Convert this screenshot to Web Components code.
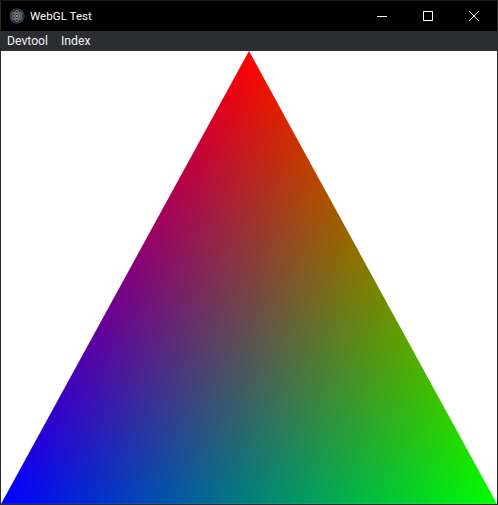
<!DOCTYPE html>
<html>
<head>
<meta charset="utf-8">
<title>WebGL Test</title>
<style>
	html, body { margin: 0; height: 100%; background: #000; overflow: hidden; }
</style>
</head>
<body>
<app-window>
	<title-bar slot="top" label="WebGL Test"></title-bar>
	<menu-bar slot="top">
		<menu-item>Devtool</menu-item>
		<menu-item>Index</menu-item>
	</menu-bar>
	<gl-triangle></gl-triangle>
</app-window>

<script>
class appWindow extends HTMLElement {
	constructor() {
		super();
		const shadow = this.attachShadow({ mode: 'open' });
		shadow.innerHTML = `
			<style>
				:host {
					display: flex;
					flex-direction: column;
					box-sizing: border-box;
					width: 498px;
					height: 505px;
					border: 1px solid #2b2b2b;
					border-top-color: #1a1a1a;
					background: #fff;
					font-family: Roboto, "Noto Sans", sans-serif;
				}
				.content { flex: 1; min-height: 0; display: flex; }
			</style>
			<slot name="top"></slot>
			<div class="content"><slot></slot></div>
		`;
	}
}
customElements.define('app-window', appWindow);

class titleBar extends HTMLElement {
	constructor() {
		super();
		const shadow = this.attachShadow({ mode: 'open' });
		shadow.innerHTML = `
			<style>
				:host {
					display: flex;
					align-items: center;
					height: 30px;
					background: #000;
					color: #fff;
					font-size: 11.6px;
				}
				.logo { width: 16px; height: 16px; margin: 0 5px 0 8px; flex: none; }
				.label { flex: 1; }
				.btn { width: 46px; height: 30px; flex: none; display: flex; align-items: center; justify-content: center; }
				svg { display: block; }
			</style>
			<svg class="logo" viewBox="0 0 16 16" fill="none">
				<circle cx="8" cy="8" r="7.8" fill="#2f323b"/>
				<g stroke="#a9bcc4" stroke-width=".7" opacity=".7">
					<ellipse cx="8" cy="8" rx="5.6" ry="2.3" transform="rotate(30 8 8)"/>
					<ellipse cx="8" cy="8" rx="5.6" ry="2.3" transform="rotate(-30 8 8)"/>
					<ellipse cx="8" cy="8" rx="5.6" ry="2.3" transform="rotate(90 8 8)"/>
				</g>
				<circle cx="8" cy="8" r=".9" fill="#a9bcc4"/>
			</svg>
			<span class="label"></span>
			<div class="btn">
				<svg width="10" height="10" viewBox="0 0 10 10"><path d="M0 5.5H10" stroke="#fff" fill="none"/></svg>
			</div>
			<div class="btn">
				<svg width="10" height="10" viewBox="0 0 10 10"><rect x=".5" y=".5" width="9" height="9" stroke="#fff" fill="none"/></svg>
			</div>
			<div class="btn">
				<svg width="10" height="10" viewBox="0 0 10 10"><path d="M0 0L10 10M10 0L0 10" stroke="#fff" stroke-width="1" fill="none"/></svg>
			</div>
		`;
		shadow.querySelector('.label').textContent = this.getAttribute('label');
	}
}
customElements.define('title-bar', titleBar);

class menuBar extends HTMLElement {
	constructor() {
		super();
		const shadow = this.attachShadow({ mode: 'open' });
		shadow.innerHTML = `
			<style>
				:host {
					display: flex;
					align-items: center;
					gap: 13px;
					height: 20px;
					padding-left: 6px;
					background: #2b2d30;
					color: #f0f0f0;
					font-size: 12.2px;
				}
			</style>
			<slot></slot>
		`;
	}
}
customElements.define('menu-bar', menuBar);

class menuItem extends HTMLElement {
	constructor() {
		super();
		const shadow = this.attachShadow({ mode: 'open' });
		shadow.innerHTML = `
			<style>:host { display: block; line-height: 20px; }</style>
			<slot></slot>
		`;
	}
}
customElements.define('menu-item', menuItem);

// one colour per corner, interpolated the way the vertex shader output would be
class glTriangle extends HTMLElement {
	constructor() {
		super();
		const shadow = this.attachShadow({ mode: 'open' });
		shadow.innerHTML = `
			<style>
				:host { display: block; flex: 1; background: #fff; }
				canvas { display: block; }
			</style>
			<canvas width="496" height="453"></canvas>
		`;
	}

	connectedCallback() {
		const canvas = this.shadowRoot.querySelector('canvas');
		const ctx = canvas.getContext('2d');
		const w = canvas.width, h = canvas.height;
		const img = ctx.createImageData(w, h);
		for (let y = 0; y < h; y++) {
			for (let x = 0; x < w; x++) {
				const px = x + 0.5, py = y + 0.5;
				const r = 1 - py / h;
				const g = (px - w / 2) / w + py / h / 2;
				const b = 1 - r - g;
				const edge = Math.min(r, g, b);
				// antialias over about one pixel
				const cover = Math.max(0, Math.min(1, edge * h / 1.1 + 0.5));
				const i = (y * w + x) * 4;
				img.data[i] = Math.max(0, r) * 255;
				img.data[i + 1] = Math.max(0, g) * 255;
				img.data[i + 2] = Math.max(0, b) * 255;
				img.data[i + 3] = cover * 255;
			}
		}
		ctx.putImageData(img, 0, 0);
	}
}
customElements.define('gl-triangle', glTriangle);
</script>
</body>
</html>
